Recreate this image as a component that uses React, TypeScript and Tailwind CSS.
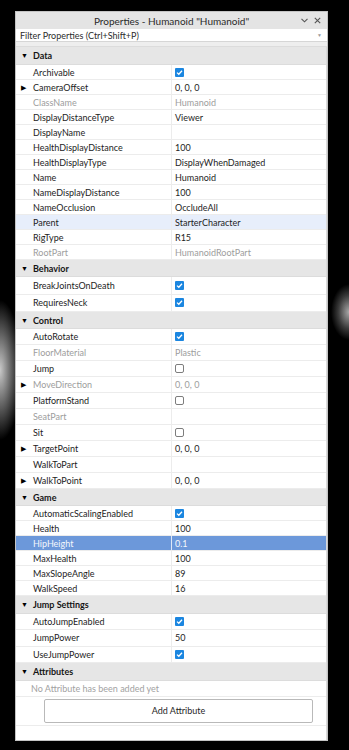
import React from 'react';

type Prop = {
  name: string;
  value?: string;
  check?: boolean;
  expand?: boolean;
  disabled?: boolean;
  state?: 'hover' | 'selected';
};

type Section = { title: string; rowH: string; headH: string; props: Prop[] };

const sections: Section[] = [
  {
    title: 'Data',
    rowH: 'h-[15px]',
    headH: 'h-[18px]',
    props: [
      { name: 'Archivable', check: true },
      { name: 'CameraOffset', value: '0, 0, 0', expand: true },
      { name: 'ClassName', value: 'Humanoid', disabled: true },
      { name: 'DisplayDistanceType', value: 'Viewer' },
      { name: 'DisplayName', value: '' },
      { name: 'HealthDisplayDistance', value: '100' },
      { name: 'HealthDisplayType', value: 'DisplayWhenDamaged' },
      { name: 'Name', value: 'Humanoid' },
      { name: 'NameDisplayDistance', value: '100' },
      { name: 'NameOcclusion', value: 'OccludeAll' },
      { name: 'Parent', value: 'StarterCharacter', state: 'hover' },
      { name: 'RigType', value: 'R15' },
      { name: 'RootPart', value: 'HumanoidRootPart', disabled: true },
    ],
  },
  {
    title: 'Behavior',
    rowH: 'h-[17.5px]',
    headH: 'h-[17px]',
    props: [
      { name: 'BreakJointsOnDeath', check: true },
      { name: 'RequiresNeck', check: true },
    ],
  },
  {
    title: 'Control',
    rowH: 'h-[16px]',
    headH: 'h-[17px]',
    props: [
      { name: 'AutoRotate', check: true },
      { name: 'FloorMaterial', value: 'Plastic', disabled: true },
      { name: 'Jump', check: false },
      { name: 'MoveDirection', value: '0, 0, 0', expand: true, disabled: true },
      { name: 'PlatformStand', check: false },
      { name: 'SeatPart', value: '', disabled: true },
      { name: 'Sit', check: false },
      { name: 'TargetPoint', value: '0, 0, 0', expand: true },
      { name: 'WalkToPart', value: '' },
      { name: 'WalkToPoint', value: '0, 0, 0', expand: true },
    ],
  },
  {
    title: 'Game',
    rowH: 'h-[15px]',
    headH: 'h-[17px]',
    props: [
      { name: 'AutomaticScalingEnabled', check: true },
      { name: 'Health', value: '100' },
      { name: 'HipHeight', value: '0.1', state: 'selected' },
      { name: 'MaxHealth', value: '100' },
      { name: 'MaxSlopeAngle', value: '89' },
      { name: 'WalkSpeed', value: '16' },
    ],
  },
  {
    title: 'Jump Settings',
    rowH: 'h-[16.3px]',
    headH: 'h-[18px]',
    props: [
      { name: 'AutoJumpEnabled', check: true },
      { name: 'JumpPower', value: '50' },
      { name: 'UseJumpPower', check: true },
    ],
  },
];

function Checkbox({ on }: { on: boolean }) {
  if (!on) {
    return <span className="block w-[9px] h-[9px] rounded-[2px] border border-[#7d7d7d] bg-white" />;
  }
  return (
    <span className="flex items-center justify-center w-[9px] h-[9px] rounded-[1px] bg-[#1b86e0]">
      <svg width="7" height="7" viewBox="0 0 7 7">
        <path d="M1 3.6 L2.8 5.3 L6 1.8" fill="none" stroke="#fff" strokeWidth="1.3" />
      </svg>
    </span>
  );
}

function Row({ p, h }: { p: Prop; h: string }) {
  const selected = p.state === 'selected';
  const bg = selected ? 'bg-[#6c98da]' : p.state === 'hover' ? 'bg-[#e7eefb]' : 'bg-white';
  const nameColor = selected ? 'text-[#f4f7fc]' : p.disabled ? 'text-[#9d9d9d]' : 'text-[#1d1d1d]';
  return (
    <div className={`flex ${h} ${bg} border-b border-[#ececec]`}>
      <div className={`w-[156px] shrink-0 flex items-center border-r ${selected ? 'border-[#dfe8f7]' : 'border-[#ececec]'}`}>
        <span className="w-[17px] pl-[5px] text-[7px] leading-none text-black">{p.expand ? '▶' : ''}</span>
        <span className={nameColor}>{p.name}</span>
      </div>
      <div className="flex-1 flex items-center pl-[3px]">
        {p.check !== undefined ? (
          <Checkbox on={p.check} />
        ) : (
          <span className={nameColor}>{p.value}</span>
        )}
      </div>
    </div>
  );
}

function Header({ title, h }: { title: string; h: string }) {
  return (
    <div className={`flex items-center ${h} bg-[#e6e6e6] border-b border-[#dcdcdc]`}>
      <span className="w-[17px] pl-[5px] text-[7px] leading-none text-black">▼</span>
      <span className="font-bold text-[#151515]">{title}</span>
    </div>
  );
}

export default function App() {
  return (
    <div
      className="w-[349px] min-h-[750px] pt-[11px] pl-[15px] bg-black bg-[radial-gradient(ellipse_22px_70px_at_0px_370px,#c9c9c9_0%,#5a5a5a_55%,transparent_100%),radial-gradient(ellipse_18px_28px_at_349px_312px,#a8a8a8_0%,#3a3a3a_60%,transparent_100%)]"
      style={{ fontFamily: 'Lato, "Noto Sans", sans-serif' }}
    >
      <div className="w-[313px] bg-white border border-[#c4c4c4] text-[9px] leading-none flex flex-col">
        {/* title bar */}
        <div className="relative h-[17px] bg-[#e4e4e4] flex items-center justify-center text-[10px] text-[#2a2a2a]">
          <span>Properties - Humanoid "Humanoid"</span>
          <div className="absolute right-[6px] top-0 h-full flex items-center gap-[6px] text-[#555]">
            <svg width="7" height="5" viewBox="0 0 7 5">
              <path d="M0.5 0.8 L3.5 3.8 L6.5 0.8" fill="none" stroke="#555" strokeWidth="1.1" />
            </svg>
            <svg width="7" height="7" viewBox="0 0 7 7">
              <path d="M0.8 0.8 L6.2 6.2 M6.2 0.8 L0.8 6.2" fill="none" stroke="#555" strokeWidth="1.1" />
            </svg>
          </div>
        </div>

        {/* filter */}
        <div className="h-[13px] bg-white flex items-center justify-between pl-[4px] pr-[5px] border-b border-[#d6d6d6]">
          <span className="text-[#2c2c2c]">Filter Properties (Ctrl+Shift+P)</span>
          <span className="text-[5px] text-[#9a9a9a]">▼</span>
        </div>
        <div className="h-[5px] bg-[#eeeeee] border-b border-[#dcdcdc]" />

        {/* property grid */}
        <div className="border-r border-[#d9d9d9]">
          {sections.map((s) => (
            <div key={s.title}>
              <Header title={s.title} h={s.headH} />
              {s.props.map((p) => (
                <Row key={p.name} p={p} h={s.rowH} />
              ))}
            </div>
          ))}

          <Header title="Attributes" h="h-[18px]" />
          <div className="h-[16px] flex items-center pl-[15px] text-[#a2a2a2] border-b border-[#ececec]">
            No Attribute has been added yet
          </div>
          <div className="h-[29px] flex items-center pl-[28px] border-b border-[#ececec]">
            <button className="w-[269px] h-[24px] bg-white border border-[#b9b9b9] rounded-[2px] text-[9px] text-[#1f1f1f]">
              Add Attribute
            </button>
          </div>
          <div className="h-[14px]" />
        </div>
      </div>
    </div>
  );
}
